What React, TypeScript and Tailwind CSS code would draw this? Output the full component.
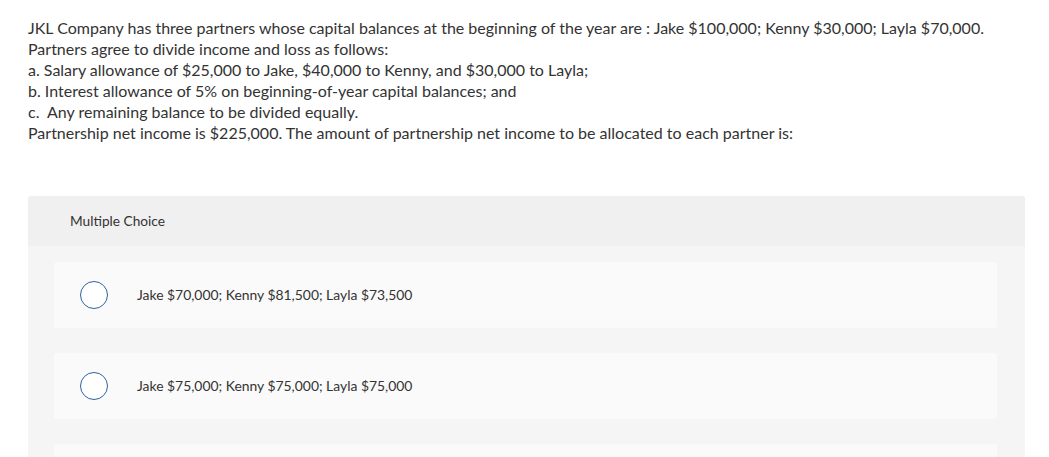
const options = [
  "Jake $70,000; Kenny $81,500; Layla $73,500",
  "Jake $75,000; Kenny $75,000; Layla $75,000",
  "Jake $80,000; Kenny $70,000; Layla $75,000",
];

export default function App() {
  return (
    <div className="min-h-screen bg-white pl-[28px] pr-[24px] pt-[17px] font-['Lato','Liberation_Sans',sans-serif] text-[#333]">
      <div className="text-[16px] leading-[21px]">
        <p>
          JKL Company has three partners whose capital balances at the beginning of the year are : Jake $100,000; Kenny
          $30,000; Layla $70,000.
        </p>
        <p>Partners agree to divide income and loss as follows:</p>
        <p>a. Salary allowance of $25,000 to Jake, $40,000 to Kenny, and $30,000 to Layla;</p>
        <p>b. Interest allowance of 5% on beginning-of-year capital balances; and</p>
        <p>c.&nbsp; Any remaining balance to be divided equally.</p>
        <p>Partnership net income is $225,000. The amount of partnership net income to be allocated to each partner is:</p>
      </div>

      <div className="mt-[53px] overflow-hidden rounded-t-[3px] bg-[#f5f5f5]">
        <div className="flex h-[50px] items-center bg-[#f0f0f0] px-[42px] text-[13.7px] text-[#333]">Multiple Choice</div>
        <div className="flex flex-col gap-[25px] pl-[26px] pr-[28px] pt-[16px] pb-[16px]">
          {options.map((opt) => (
            <div key={opt} className="flex h-[66px] items-center rounded-[3px] bg-[#fafafa] pl-[26px]">
              <span className="h-[28px] w-[28px] shrink-0 rounded-full border-[1.5px] border-[#2d63a0] bg-white" />
              <span className="ml-[29px] text-[13.9px] text-[#333]">{opt}</span>
            </div>
          ))}
        </div>
      </div>
    </div>
  );
}
